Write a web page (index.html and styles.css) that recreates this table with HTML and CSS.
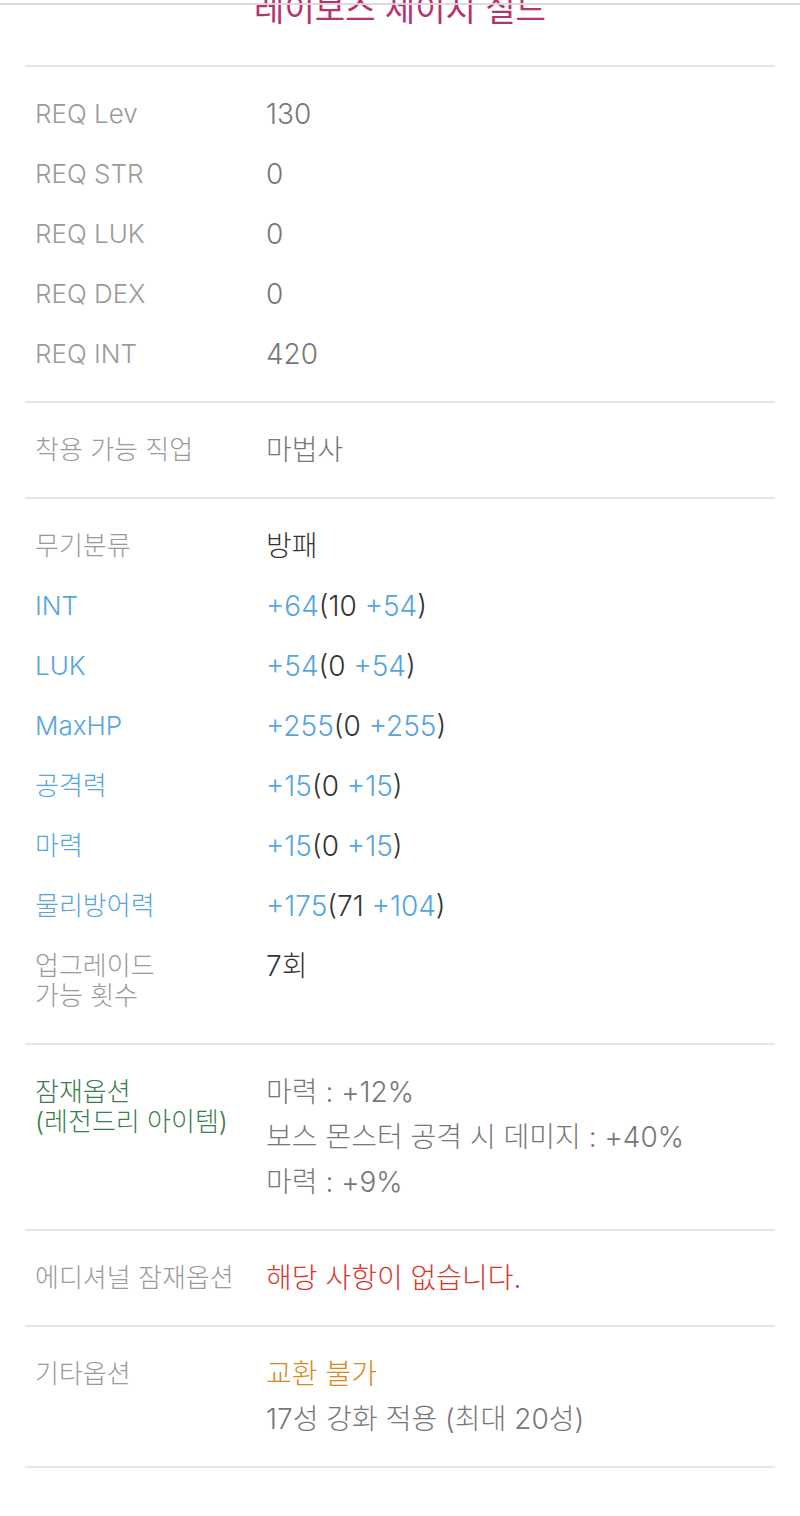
FILE: index.html
```html
<!DOCTYPE html>
<html lang="ko">
<head>
<meta charset="utf-8">
<link rel="stylesheet" href="styles.css">
</head>
<body>
<div class="topline"></div>
<div class="page">
  <div class="title-wrap"><h1 class="title">레이보스 세이지 실드</h1></div>

  <section class="sec">
    <div class="row"><div class="lbl">REQ Lev</div><div class="val">130</div></div>
    <div class="row"><div class="lbl">REQ STR</div><div class="val">0</div></div>
    <div class="row"><div class="lbl">REQ LUK</div><div class="val">0</div></div>
    <div class="row"><div class="lbl">REQ DEX</div><div class="val">0</div></div>
    <div class="row"><div class="lbl">REQ INT</div><div class="val">420</div></div>
  </section>

  <section class="sec">
    <div class="row"><div class="lbl">착용 가능 직업</div><div class="val">마법사</div></div>
  </section>

  <section class="sec">
    <div class="row"><div class="lbl">무기분류</div><div class="val dark">방패</div></div>
    <div class="row"><div class="lbl blue">INT</div><div class="val dark"><span class="blue">+64</span>(10 <span class="blue">+54</span>)</div></div>
    <div class="row"><div class="lbl blue">LUK</div><div class="val dark"><span class="blue">+54</span>(0 <span class="blue">+54</span>)</div></div>
    <div class="row"><div class="lbl blue">MaxHP</div><div class="val dark"><span class="blue">+255</span>(0 <span class="blue">+255</span>)</div></div>
    <div class="row"><div class="lbl blue">공격력</div><div class="val dark"><span class="blue">+15</span>(0 <span class="blue">+15</span>)</div></div>
    <div class="row"><div class="lbl blue">마력</div><div class="val dark"><span class="blue">+15</span>(0 <span class="blue">+15</span>)</div></div>
    <div class="row"><div class="lbl blue">물리방어력</div><div class="val dark"><span class="blue">+175</span>(71 <span class="blue">+104</span>)</div></div>
    <div class="row"><div class="lbl">업그레이드<br>가능 횟수</div><div class="val dark">7회</div></div>
  </section>

  <section class="sec">
    <div class="row"><div class="lbl green">잠재옵션<br>(레전드리 아이템)</div>
      <div class="val lines">
        <div>마력 : +12%</div>
        <div>보스 몬스터 공격 시 데미지 : +40%</div>
        <div>마력 : +9%</div>
      </div>
    </div>
  </section>

  <section class="sec">
    <div class="row"><div class="lbl">에디셔널 잠재옵션</div><div class="val red">해당 사항이 없습니다.</div></div>
  </section>

  <section class="sec">
    <div class="row"><div class="lbl">기타옵션</div>
      <div class="val lines">
        <div class="orange">교환 불가</div>
        <div>17성 강화 적용 (최대 20성)</div>
      </div>
    </div>
  </section>
  <div class="endline"></div>
</div>
</body>
</html>
```
FILE: styles.css
```css
html, body {
  margin: 0;
  padding: 0;
  background: #ffffff;
}
body {
  font-family: "Inter", "Noto Sans CJK KR", sans-serif;
  font-size: 26px;
  font-weight: 300;
  color: #7a7a7a;
  position: relative;
}
.topline {
  position: absolute;
  left: 0;
  right: 0;
  top: 3px;
  height: 2px;
  background: rgba(215, 215, 215, 0.9);
}
.page {
  margin: 0 25px;
}
.title-wrap {
  height: 65px;
  overflow: hidden;
}
.title {
  margin: 0;
  font-weight: 400;
  font-size: 33px;
  line-height: 44px;
  color: #b6336f;
  text-align: center;
  margin-top: -13px;
}
.sec {
  border-top: 2px solid #e6e6e6;
  padding: 17px 0;
}
.endline {
  border-top: 2px solid #e6e6e6;
}
.row {
  display: flex;
  padding: 15px 0;
  line-height: 30px;
}
.lbl {
  width: 231px;
  padding-left: 10px;
  flex: none;
  color: #9a9a9a;
}
.val {
  color: #777777;
  font-size: 28px;
}
.lines {
  display: flex;
  flex-direction: column;
  gap: 15px;
}
.dark { color: #333333; }
.blue { color: #55a5e0; }
.green { color: #3b7d4e; }
.red { color: #d8372c; }
.orange { color: #d98a1e; }
```
